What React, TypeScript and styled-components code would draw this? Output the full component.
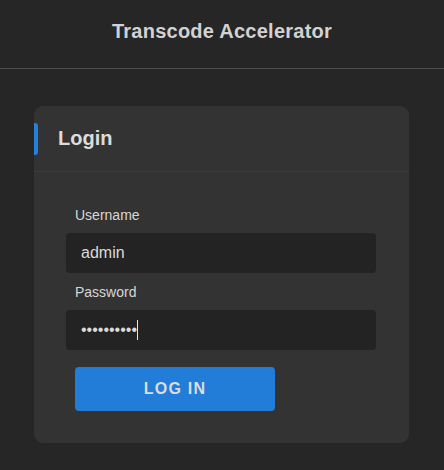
import { FunctionComponent } from "react";
import styled, { createGlobalStyle } from "styled-components";

const GlobalStyle = createGlobalStyle`
  html, body {
    margin: 0;
    padding: 0;
    background-color: #262626;
    font-family: "Liberation Sans", Arial, sans-serif;
  }
  * {
    box-sizing: border-box;
  }
`;

const Page = styled.div`
  min-height: 470px;
  display: flex;
  flex-direction: column;
  background-color: #262626;
`;

const TopBar = styled.header`
  height: 69px;
  display: flex;
  align-items: center;
  justify-content: center;
  border-bottom: 1px solid #4f4f4f;
  padding-bottom: 5px;
`;

const AppTitle = styled.h1`
  margin: 0;
  font-size: 20px;
  font-weight: 700;
  color: #d2d2d2;
  letter-spacing: 0.25px;
`;

const Main = styled.main`
  display: flex;
  padding: 37px 35px 0 34px;
`;

const Card = styled.section`
  flex: 1;
  background-color: #333333;
  border-radius: 9px;
  display: flex;
  flex-direction: column;
`;

const CardHeader = styled.div`
  position: relative;
  height: 66px;
  display: flex;
  align-items: center;
  padding: 0 0 0 24px;
  border-bottom: 1px solid #3c3c3c;
`;

const Accent = styled.span`
  position: absolute;
  left: 0;
  top: 17px;
  width: 4px;
  height: 32px;
  border-radius: 0 3px 3px 0;
  background-color: #2380dc;
`;

const CardTitle = styled.h2`
  margin: 0;
  font-size: 20px;
  font-weight: 700;
  color: #dcdcdc;
`;

const Form = styled.form`
  display: flex;
  flex-direction: column;
  padding: 35px 33px 32px 32px;
`;

const Label = styled.label<{ $gap?: number }>`
  display: block;
  margin: ${(p) => p.$gap ?? 0}px 0 10px 9px;
  font-size: 14px;
  line-height: 16px;
  color: #d6d6d6;
`;

const FieldWrap = styled.div`
  position: relative;
`;

const Input = styled.input`
  display: block;
  width: 100%;
  height: 40px;
  padding: 0 16px 0 15px;
  border: none;
  border-radius: 4px;
  background-color: #232323;
  color: #dadada;
  font-family: "Liberation Sans", Arial, sans-serif;
  font-size: 16px;
  outline: none;
  caret-color: transparent;
`;

const Caret = styled.span`
  position: absolute;
  left: 71px;
  top: 10px;
  width: 1px;
  height: 20px;
  background-color: #e6e6e6;
`;

const SubmitButton = styled.button`
  align-self: flex-start;
  margin: 17px 0 0 9px;
  width: 200px;
  height: 44px;
  border: none;
  border-radius: 4px;
  background-color: #217dd7;
  color: #dcdcdc;
  font-family: "Liberation Sans", Arial, sans-serif;
  font-size: 16px;
  font-weight: 700;
  letter-spacing: 1.2px;
  cursor: pointer;
`;

const App: FunctionComponent = () => {
  return (
    <>
      <GlobalStyle />
      <Page>
        <TopBar>
          <AppTitle>Transcode Accelerator</AppTitle>
        </TopBar>
        <Main>
          <Card>
            <CardHeader>
              <Accent />
              <CardTitle>Login</CardTitle>
            </CardHeader>
            <Form onSubmit={(e) => e.preventDefault()}>
              <Label htmlFor="username">Username</Label>
              <Input id="username" type="text" defaultValue="admin" />
              <Label htmlFor="password" $gap={11}>
                Password
              </Label>
              <FieldWrap>
                <Input id="password" type="password" defaultValue="1234567890" />
                <Caret />
              </FieldWrap>
              <SubmitButton type="submit">LOG IN</SubmitButton>
            </Form>
          </Card>
        </Main>
      </Page>
    </>
  );
};

export default App;
